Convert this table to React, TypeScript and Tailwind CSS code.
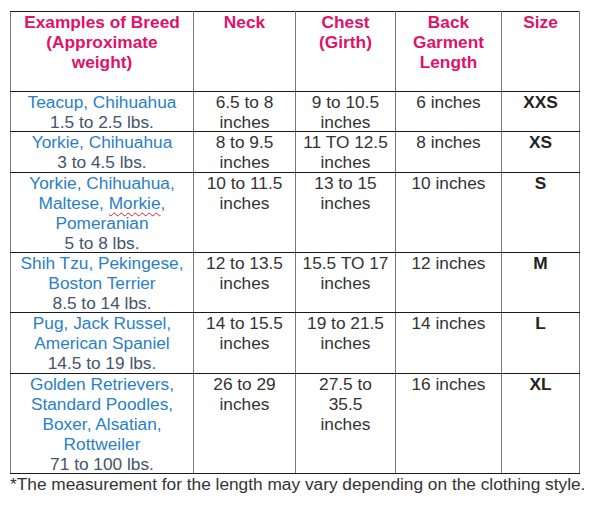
import React from 'react';

type Row = {
  breeds: string[];
  weight: string;
  neck: string[];
  chest: string[];
  back: string;
  size: string;
  h: string;
};

const rows: Row[] = [
  {
    breeds: [`Teacup, Chihuahua`],
    weight: `1.5 to 2.5 lbs.`,
    neck: [`6.5 to 8`, `inches`],
    chest: [`9 to 10.5`, `inches`],
    back: `6 inches`,
    size: `XXS`,
    h: `h-[40px]`,
  },
  {
    breeds: [`Yorkie, Chihuahua`],
    weight: `3 to 4.5 lbs.`,
    neck: [`8 to 9.5`, `inches`],
    chest: [`11 TO 12.5`, `inches`],
    back: `8 inches`,
    size: `XS`,
    h: `h-[41px]`,
  },
  {
    breeds: [`Yorkie, Chihuahua,`, `Maltese, Morkie,`, `Pomeranian`],
    weight: `5 to 8 lbs.`,
    neck: [`10 to 11.5`, `inches`],
    chest: [`13 to 15`, `inches`],
    back: `10 inches`,
    size: `S`,
    h: `h-[80px]`,
  },
  {
    breeds: [`Shih Tzu, Pekingese,`, `Boston Terrier`],
    weight: `8.5 to 14 lbs.`,
    neck: [`12 to 13.5`, `inches`],
    chest: [`15.5 TO 17`, `inches`],
    back: `12 inches`,
    size: `M`,
    h: `h-[60px]`,
  },
  {
    breeds: [`Pug, Jack Russel,`, `American Spaniel`],
    weight: `14.5 to 19 lbs.`,
    neck: [`14 to 15.5`, `inches`],
    chest: [`19 to 21.5`, `inches`],
    back: `14 inches`,
    size: `L`,
    h: `h-[61px]`,
  },
  {
    breeds: [`Golden Retrievers,`, `Standard Poodles,`, `Boxer, Alsatian,`, `Rottweiler`],
    weight: `71 to 100 lbs.`,
    neck: [`26 to 29`, `inches`],
    chest: [`27.5 to`, `35.5`, `inches`],
    back: `16 inches`,
    size: `XL`,
    h: `h-[100px]`,
  },
];

const cell = `border-x border-x-[#7a7a7a] border-y border-y-[#1a1a1a] align-top text-center p-0`;

const BreedLine: React.FC<{ text: string }> = ({ text }) => {
  if (!text.includes(`Morkie`)) return <div>{text}</div>;
  const [a, b] = text.split(`Morkie`);
  return (
    <div>
      {a}
      <span className="underline decoration-wavy decoration-[#e02020] decoration-1 underline-offset-[3px]">
        Morkie
      </span>
      {b}
    </div>
  );
};

// content may hang 1px into the row border, as in the source document
const Fit: React.FC<{ children: React.ReactNode }> = ({ children }) => (
  <div className="-mb-px">{children}</div>
);

export default function App() {
  return (
    <div className="w-[600px] h-[505px] bg-white font-['Liberation_Sans',Arial,sans-serif] text-[17.3px] leading-[20px] text-[#333]">
      <div className="pt-[11px] pl-[10px]">
        <table className="border-collapse table-fixed w-[569px]">
          <colgroup>
            <col className="w-[183px]" />
            <col className="w-[102px]" />
            <col className="w-[100px]" />
            <col className="w-[106px]" />
            <col className="w-[78px]" />
          </colgroup>
          <thead>
            <tr className="h-[80px] font-bold text-[#e0116a]">
              <th className={cell}>
                Examples of Breed
                <br />
                (Approximate
                <br />
                weight)
              </th>
              <th className={cell}>Neck</th>
              <th className={cell}>
                Chest
                <br />
                (Girth)
              </th>
              <th className={cell}>
                Back
                <br />
                Garment
                <br />
                Length
              </th>
              <th className={cell}>Size</th>
            </tr>
          </thead>
          <tbody>
            {rows.map((r) => (
              <tr key={r.size} className={r.h}>
                <td className={cell}>
                  <Fit>
                    <div className="text-[#2a80c6]">
                      {r.breeds.map((b) => (
                        <BreedLine key={b} text={b} />
                      ))}
                    </div>
                    <div className="text-[#44546a]">{r.weight}</div>
                  </Fit>
                </td>
                <td className={cell}>
                  <Fit>
                    {r.neck.map((n) => (
                      <div key={n}>{n}</div>
                    ))}
                  </Fit>
                </td>
                <td className={cell}>
                  <Fit>
                    {r.chest.map((c) => (
                      <div key={c}>{c}</div>
                    ))}
                  </Fit>
                </td>
                <td className={cell}>{r.back}</td>
                <td className={`${cell} font-bold text-[#222]`}>{r.size}</td>
              </tr>
            ))}
          </tbody>
        </table>
        <p className="text-[#333]">
          *The measurement for the length may vary depending on the clothing style.
        </p>
      </div>
    </div>
  );
}
